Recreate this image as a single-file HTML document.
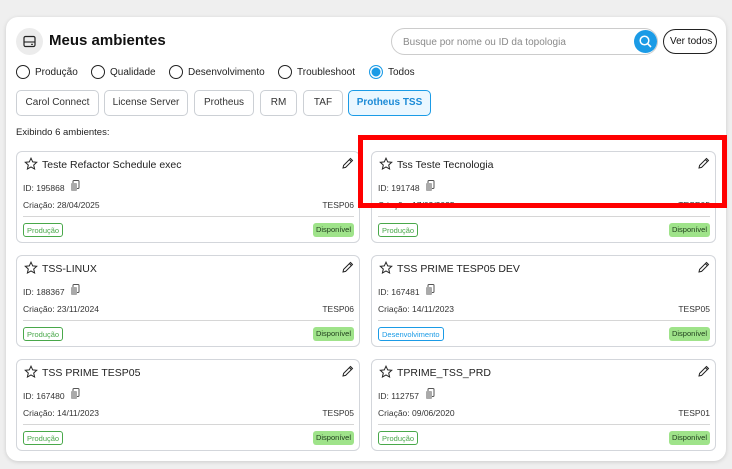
<!DOCTYPE html>
<html><head><meta charset="utf-8"><style>
*{box-sizing:border-box;margin:0;padding:0}
body{width:732px;height:469px;background:#efefef;font-family:"Liberation Sans",sans-serif;color:#222;position:relative;overflow:hidden}
.abs{position:absolute}
.panel{left:6px;top:17px;width:720px;height:444px;background:#fff;border-radius:12px;box-shadow:0 1px 4px rgba(0,0,0,.15)}
.ic{left:16px;top:28px;width:27px;height:27px;border-radius:50%;background:#ececec}
.search{left:391px;top:28px;width:267px;height:27px;border:1px solid #ccc;border-radius:14px;font-size:10px;color:#8a8a8a;padding:8px 0 0 11px}
.sbtn{left:634px;top:30px;width:23px;height:23px;border-radius:50%;background:#1b9be6}
.ver{left:663px;top:29px;width:54px;height:25px;border:1.3px solid #222;border-radius:13px;font-size:10px;padding:6px 0 0 6px;color:#111}
.radio{top:65px;width:14px;height:14px;border:1.4px solid #222;border-radius:50%}
.rl{top:67px;font-size:10px;color:#222}
.chip{top:90px;height:26px;border:1px solid #ccd0d5;border-radius:5px;font-size:10px;color:#333;text-align:center;line-height:24px}
.card{width:344px;height:92px;border:1px solid #d3d6db;border-radius:6px;background:#fff}
.card .t{position:absolute;left:25px;top:7px;font-size:10.5px;color:#222}
.card .star{position:absolute;left:7px;top:5px}
.card .pen{position:absolute;right:5px;top:5px}
.card .id{position:absolute;left:6px;top:31px;font-size:8.5px;color:#333}
.card .cp{position:absolute;left:53px;top:28px}
.card .cr{position:absolute;left:6px;top:48px;font-size:8.5px;color:#333}
.card .ts{position:absolute;right:5px;top:48px;font-size:8.5px;color:#333}
.card .hr{position:absolute;left:6px;right:5px;top:64px;border-top:1px solid #d6d6d6}
.card .b1{position:absolute;left:6px;top:71px;height:14px;border:1px solid #49a84a;border-radius:3px;font-size:7.5px;color:#49a84a;padding:2px 3px 0}
.card .b1.d{border-color:#1b9be6;color:#1b9be6}
.card .b2{position:absolute;right:5px;top:71px;height:14px;background:#9fe38a;border-radius:3px;font-size:7.5px;color:#1d3a1a;padding:2px 3px 0}
</style></head><body>
<div class="abs panel"></div>
<div class="abs ic"></div>
<svg class="abs" style="left:23px;top:35px" width="13" height="13" viewBox="0 0 13 13"><rect x="1" y="1.5" width="11" height="10" rx="1.5" fill="none" stroke="#222" stroke-width="1.2"/><line x1="1" y1="7" x2="12" y2="7" stroke="#222" stroke-width="1.1"/><line x1="8" y1="9.3" x2="10" y2="9.3" stroke="#222"/></svg>
<div class="abs" style="left:49px;top:32px;font-size:15px;font-weight:bold;color:#111">Meus ambientes</div>
<div class="abs search">Busque por nome ou ID da topologia</div>
<div class="abs sbtn"></div>
<svg class="abs" style="left:638px;top:34px" width="15" height="15" viewBox="0 0 15 15"><circle cx="6.5" cy="6.5" r="4.3" fill="none" stroke="#fff" stroke-width="1.5"/><line x1="9.7" y1="9.7" x2="13" y2="13" stroke="#fff" stroke-width="1.6"/></svg>
<div class="abs ver">Ver todos</div>

<div class="abs radio" style="left:16px"></div><div class="abs rl" style="left:35px">Produção</div>
<div class="abs radio" style="left:91px"></div><div class="abs rl" style="left:110px">Qualidade</div>
<div class="abs radio" style="left:169px"></div><div class="abs rl" style="left:188px">Desenvolvimento</div>
<div class="abs radio" style="left:278px"></div><div class="abs rl" style="left:297px">Troubleshoot</div>
<div class="abs radio" style="left:369px;border-color:#1b9be6;background:#1b9be6;box-shadow:inset 0 0 0 1.5px #fff"></div><div class="abs rl" style="left:388px">Todos</div>

<div class="abs chip" style="left:16px;width:83px">Carol Connect</div>
<div class="abs chip" style="left:104px;width:84px">License Server</div>
<div class="abs chip" style="left:194px;width:60px">Protheus</div>
<div class="abs chip" style="left:260px;width:37px">RM</div>
<div class="abs chip" style="left:303px;width:40px">TAF</div>
<div class="abs chip" style="left:348px;width:83px;border-color:#1b9be6;background:#eaf7ff;color:#1b8ad6;font-weight:bold">Protheus TSS</div>
<div class="abs" style="left:16px;top:127px;font-size:9.5px;color:#222">Exibindo 6 ambientes:</div>

<div class="abs card" style="left:16px;top:151px"><svg class="star" width="14" height="14" viewBox="0 0 14 14"><path d="M7 1.2l1.7 3.7 4 .4-3 2.7.9 4L7 10 3.4 12l.9-4-3-2.7 4-.4z" fill="none" stroke="#222" stroke-width="1"/></svg><div class="t">Teste Refactor Schedule exec</div><svg class="pen" width="13" height="13" viewBox="0 0 13 13"><path d="M2 11l.6-2.6L9.5 1.5l2 2-6.9 6.9z M8.4 2.6l2 2" fill="none" stroke="#222" stroke-width="1"/></svg><div class="id">ID: 195868</div><svg class="cp" width="10" height="12" viewBox="0 0 10 12"><rect x="3" y="0.5" width="6" height="8" rx="1" fill="#fff" stroke="#555"/><rect x="1" y="3" width="6" height="8" rx="1" fill="#aaa"/></svg><div class="cr">Criação: 28/04/2025</div><div class="ts">TESP06</div><div class="hr"></div><div class="b1">Produção</div><div class="b2">Disponível</div></div>

<div class="abs card" style="left:371px;top:151px;width:345px"><svg class="star" width="14" height="14" viewBox="0 0 14 14"><path d="M7 1.2l1.7 3.7 4 .4-3 2.7.9 4L7 10 3.4 12l.9-4-3-2.7 4-.4z" fill="none" stroke="#222" stroke-width="1"/></svg><div class="t">Tss Teste Tecnologia</div><svg class="pen" width="13" height="13" viewBox="0 0 13 13"><path d="M2 11l.6-2.6L9.5 1.5l2 2-6.9 6.9z M8.4 2.6l2 2" fill="none" stroke="#222" stroke-width="1"/></svg><div class="id">ID: 191748</div><svg class="cp" width="10" height="12" viewBox="0 0 10 12"><rect x="3" y="0.5" width="6" height="8" rx="1" fill="#fff" stroke="#555"/><rect x="1" y="3" width="6" height="8" rx="1" fill="#aaa"/></svg><div class="cr">Criação: 17/03/2025</div><div class="ts">TESP05</div><div class="hr"></div><div class="b1">Produção</div><div class="b2">Disponível</div></div>

<div class="abs card" style="left:16px;top:255px"><svg class="star" width="14" height="14" viewBox="0 0 14 14"><path d="M7 1.2l1.7 3.7 4 .4-3 2.7.9 4L7 10 3.4 12l.9-4-3-2.7 4-.4z" fill="none" stroke="#222" stroke-width="1"/></svg><div class="t">TSS-LINUX</div><svg class="pen" width="13" height="13" viewBox="0 0 13 13"><path d="M2 11l.6-2.6L9.5 1.5l2 2-6.9 6.9z M8.4 2.6l2 2" fill="none" stroke="#222" stroke-width="1"/></svg><div class="id">ID: 188367</div><svg class="cp" width="10" height="12" viewBox="0 0 10 12"><rect x="3" y="0.5" width="6" height="8" rx="1" fill="#fff" stroke="#555"/><rect x="1" y="3" width="6" height="8" rx="1" fill="#aaa"/></svg><div class="cr">Criação: 23/11/2024</div><div class="ts">TESP06</div><div class="hr"></div><div class="b1">Produção</div><div class="b2">Disponível</div></div>

<div class="abs card" style="left:371px;top:255px;width:345px"><svg class="star" width="14" height="14" viewBox="0 0 14 14"><path d="M7 1.2l1.7 3.7 4 .4-3 2.7.9 4L7 10 3.4 12l.9-4-3-2.7 4-.4z" fill="none" stroke="#222" stroke-width="1"/></svg><div class="t">TSS PRIME TESP05 DEV</div><svg class="pen" width="13" height="13" viewBox="0 0 13 13"><path d="M2 11l.6-2.6L9.5 1.5l2 2-6.9 6.9z M8.4 2.6l2 2" fill="none" stroke="#222" stroke-width="1"/></svg><div class="id">ID: 167481</div><svg class="cp" width="10" height="12" viewBox="0 0 10 12"><rect x="3" y="0.5" width="6" height="8" rx="1" fill="#fff" stroke="#555"/><rect x="1" y="3" width="6" height="8" rx="1" fill="#aaa"/></svg><div class="cr">Criação: 14/11/2023</div><div class="ts">TESP05</div><div class="hr"></div><div class="b1 d">Desenvolvimento</div><div class="b2">Disponível</div></div>

<div class="abs card" style="left:16px;top:359px"><svg class="star" width="14" height="14" viewBox="0 0 14 14"><path d="M7 1.2l1.7 3.7 4 .4-3 2.7.9 4L7 10 3.4 12l.9-4-3-2.7 4-.4z" fill="none" stroke="#222" stroke-width="1"/></svg><div class="t">TSS PRIME TESP05</div><svg class="pen" width="13" height="13" viewBox="0 0 13 13"><path d="M2 11l.6-2.6L9.5 1.5l2 2-6.9 6.9z M8.4 2.6l2 2" fill="none" stroke="#222" stroke-width="1"/></svg><div class="id">ID: 167480</div><svg class="cp" width="10" height="12" viewBox="0 0 10 12"><rect x="3" y="0.5" width="6" height="8" rx="1" fill="#fff" stroke="#555"/><rect x="1" y="3" width="6" height="8" rx="1" fill="#aaa"/></svg><div class="cr">Criação: 14/11/2023</div><div class="ts">TESP05</div><div class="hr"></div><div class="b1">Produção</div><div class="b2">Disponível</div></div>

<div class="abs card" style="left:371px;top:359px;width:345px"><svg class="star" width="14" height="14" viewBox="0 0 14 14"><path d="M7 1.2l1.7 3.7 4 .4-3 2.7.9 4L7 10 3.4 12l.9-4-3-2.7 4-.4z" fill="none" stroke="#222" stroke-width="1"/></svg><div class="t">TPRIME_TSS_PRD</div><svg class="pen" width="13" height="13" viewBox="0 0 13 13"><path d="M2 11l.6-2.6L9.5 1.5l2 2-6.9 6.9z M8.4 2.6l2 2" fill="none" stroke="#222" stroke-width="1"/></svg><div class="id">ID: 112757</div><svg class="cp" width="10" height="12" viewBox="0 0 10 12"><rect x="3" y="0.5" width="6" height="8" rx="1" fill="#fff" stroke="#555"/><rect x="1" y="3" width="6" height="8" rx="1" fill="#aaa"/></svg><div class="cr">Criação: 09/06/2020</div><div class="ts">TESP01</div><div class="hr"></div><div class="b1">Produção</div><div class="b2">Disponível</div></div>

<div class="abs" style="left:358px;top:135px;width:369px;height:73px;border:5px solid #f00"></div>
</body></html>
